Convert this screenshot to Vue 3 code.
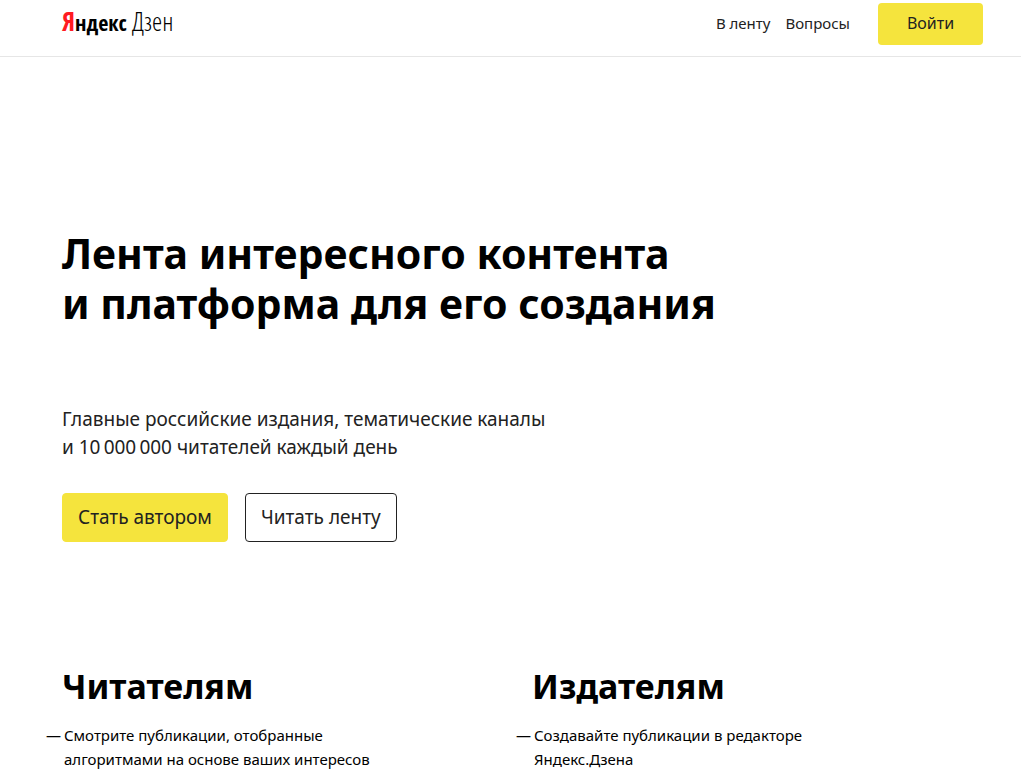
<script setup>
const columns = [
  { title: 'Читателям', lines: ['Смотрите публикации, отобранные', 'алгоритмами на основе ваших интересов'] },
  { title: 'Издателям', lines: ['Создавайте публикации в редакторе', 'Яндекс.Дзена'] },
]
</script>

<template>
  <div class="page">
    <header class="header">
      <a href="#" class="logo"><span class="brand"><span class="red">Я</span>ндекс</span> <span class="product">Дзен</span></a>
      <nav class="nav">
        <a href="#">В ленту</a>
        <a href="#">Вопросы</a>
        <button type="button" class="login">Войти</button>
      </nav>
    </header>
    <main class="main">
      <h1>Лента интересного контента<br>и платформа для его создания</h1>
      <p class="lead">Главные российские издания, тематические каналы<br>и 10&#8239;000&#8239;000 читателей каждый день</p>
      <div class="actions">
        <button type="button" class="action primary">Стать автором</button>
        <button type="button" class="action">Читать ленту</button>
      </div>
      <div class="columns">
        <section v-for="c in columns" :key="c.title">
          <h2>{{ c.title }}</h2>
          <ul>
            <li>{{ c.lines[0] }}<br>{{ c.lines[1] }}</li>
          </ul>
        </section>
      </div>
    </main>
  </div>
</template>

<style>
body { background: #fff; }
</style>

<style scoped>
.page { font-family: "Noto Sans", sans-serif; color: #222; }
.header { display: flex; justify-content: space-between; align-items: flex-start; height: 56px; padding: 0 38px 0 62px; border-bottom: 1px solid #e6e6e6; }
a { color: inherit; text-decoration: none; }
.logo { font-family: "Open Sans Condensed", "Noto Sans", sans-serif; font-size: 22px; line-height: 42px; color: #000; }
.brand { font-size: 22px; font-weight: 700; }
.product { font-family: "Open Sans Condensed Light", "Open Sans Condensed", sans-serif; font-size: 26px; font-weight: 300; }
.red { font-size: 26px; color: #ff1a22; }
.nav { display: flex; align-items: center; gap: 15px; padding-top: 3px; font-size: 15px; }
.nav a { padding-bottom: 2px; }
button { font-family: inherit; color: #222; margin: 0; cursor: pointer; }
.login { width: 105px; height: 42px; margin-left: 13px; border: 0; border-radius: 4px; background: #f5e43d; font-size: 16px; padding: 0 0 2px; }
.main { padding: 171px 62px 0; }
h1 { margin: 0; font-size: 41px; line-height: 50px; font-weight: 700; color: #000; }
.lead { margin: 77px 0 0; font-size: 19px; line-height: 28px; }
.actions { display: flex; gap: 17px; margin-top: 32px; }
.action { height: 49px; padding: 0 15px 2px; border: 1px solid #222; border-radius: 4px; background: #fff; font-size: 19px; }
.primary { border-color: #f5e43d; background: #f5e43d; }
.columns { display: grid; grid-template-columns: 1fr 1fr; gap: 43px; margin-top: 122px; }
h2 { margin: 0; font-size: 34px; line-height: 44px; color: #000; }
ul { list-style: none; margin: 15px 0 0; padding: 0 0 0 2px; }
li { position: relative; font-size: 15px; line-height: 24px; color: #000; }
li::before { content: "—"; position: absolute; right: 100%; margin-right: 3px; }
</style>
